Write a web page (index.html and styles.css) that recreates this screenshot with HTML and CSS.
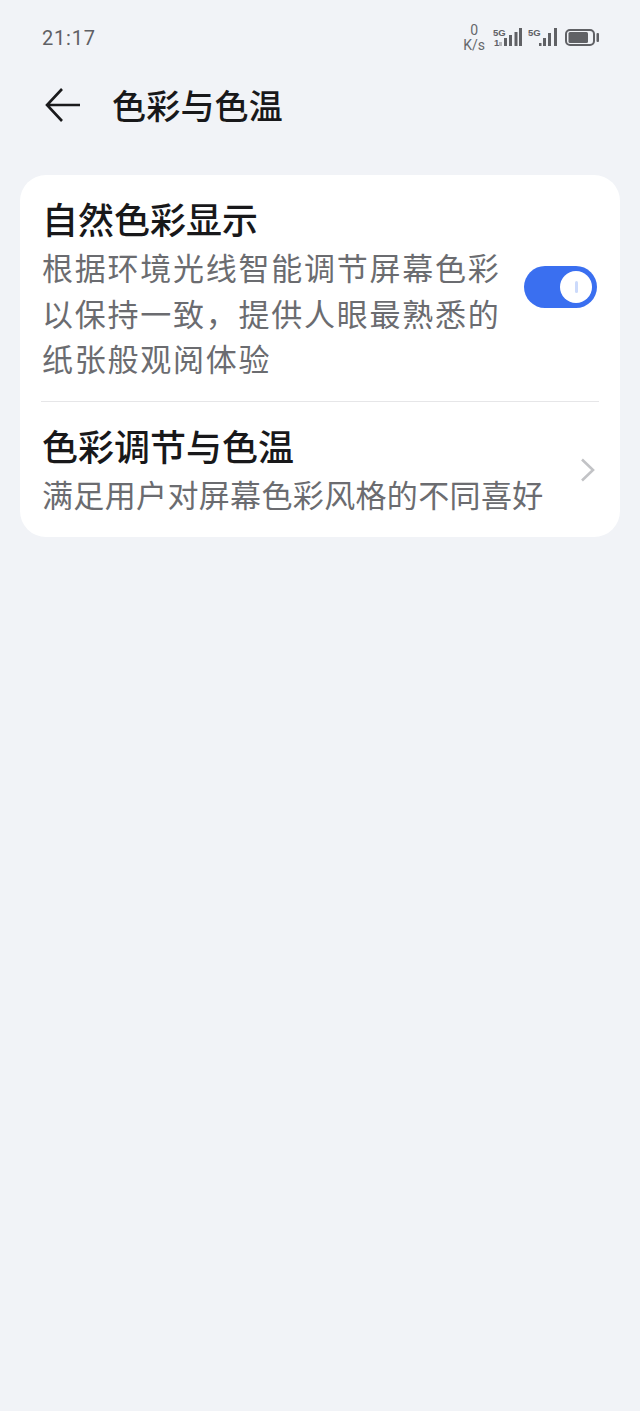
FILE: index.html
```html
<!DOCTYPE html>
<html lang="zh-CN">
<head>
    <meta charset="UTF-8">
    <meta name="viewport" content="width=device-width, initial-scale=1.0">
    <title>色彩与色温</title>
    <link rel="stylesheet" href="styles.css">
</head>
<body>
    <!-- 状态栏 -->
    <div class="status-bar">
        <span class="time">21:17</span>
        <div class="status-icons">
            <div class="speed"><span>0</span><span>K/s</span></div>
            <svg class="signal" width="30" height="20" viewBox="0 0 30 20">
                <text x="0" y="9" class="net-label">5G</text>
                <text x="1" y="19" class="net-label">1</text>
                <rect x="6" y="15" width="3" height="4" fill="#b5b6b9"/>
                <rect x="11" y="11" width="3" height="8" fill="#606165"/>
                <rect x="16" y="8" width="3" height="11" fill="#606165"/>
                <rect x="21.5" y="5" width="3" height="14" fill="#606165"/>
                <rect x="26" y="1" width="3" height="18" fill="#606165"/>
            </svg>
            <svg class="signal" width="30" height="20" viewBox="0 0 30 20">
                <text x="0" y="9" class="net-label">5G</text>
                <rect x="11" y="16" width="2.5" height="3" fill="#606165"/>
                <rect x="15" y="11" width="3" height="8" fill="#606165"/>
                <rect x="20" y="6" width="3" height="13" fill="#606165"/>
                <rect x="26" y="1" width="3" height="18" fill="#606165"/>
            </svg>
            <svg class="battery" width="36" height="20" viewBox="0 0 36 20">
                <rect x="3" y="3" width="28" height="15" rx="4" fill="none" stroke="#606165" stroke-width="2"/>
                <rect x="5.5" y="5" width="19.5" height="11" rx="1.5" fill="#606165"/>
                <rect x="33.5" y="6" width="2.5" height="9" rx="1" fill="#606165"/>
            </svg>
        </div>
    </div>

    <!-- 标题栏 -->
    <div class="title-bar">
        <svg class="back" width="36" height="36" viewBox="0 0 36 36">
            <path d="M17 2 L2 18 L17 34 M2 18 H35" fill="none" stroke="#1a1a1c" stroke-width="2.6"/>
        </svg>
        <h1>色彩与色温</h1>
    </div>

    <!-- 设置卡片 -->
    <div class="card">
        <div class="row row-first">
            <div class="row-text">
                <div class="row-title">自然色彩显示</div>
                <div class="row-desc wide">根据环境光线智能调节屏幕色彩<br>以保持一致，提供人眼最熟悉的<br>纸张般观阅体验</div>
            </div>
            <div class="switch">
                <div class="knob"><span></span></div>
            </div>
        </div>
        <div class="divider"></div>
        <div class="row row-last">
            <div class="row-text">
                <div class="row-title">色彩调节与色温</div>
                <div class="row-desc">满足用户对屏幕色彩风格的不同喜好</div>
            </div>
            <svg class="chevron" width="16" height="24" viewBox="0 0 16 24">
                <path d="M2 1.5 L13 12 L2 22.5" fill="none" stroke="#c2c3c6" stroke-width="2.6"/>
            </svg>
        </div>
    </div>
</body>
</html>
```

FILE: styles.css
```css
html, body {
    height: 100%;
}

body {
    margin: 0;
    background: #f1f3f7;
    font-family: "Noto Sans CJK SC", "Noto Sans", sans-serif;
    color: #18181a;
}

.status-bar {
    display: flex;
    justify-content: space-between;
    align-items: center;
    height: 30px;
    padding: 22px 41px 0 42px;
}

.time {
    font-family: Roboto, sans-serif;
    font-size: 20px;
    letter-spacing: 0.8px;
    color: #5f6064;
    padding-top: 1px;
}

.status-icons {
    display: flex;
    align-items: center;
    gap: 5px;
}

.speed {
    display: flex;
    flex-direction: column;
    align-items: center;
    font-family: Roboto, sans-serif;
    font-size: 14px;
    line-height: 15px;
    color: #66676b;
    margin-right: 3px;
    padding-top: 2px;
}

.net-label {
    font-family: "Liberation Sans", sans-serif;
    font-size: 9.5px;
    font-weight: bold;
    fill: #606165;
}

.title-bar {
    display: flex;
    align-items: center;
    height: 50px;
    margin-top: 28px;
    padding-left: 45px;
}

.back {
    margin-right: 31px;
}

h1 {
    margin: 0;
    font-size: 34px;
    font-weight: 500;
    line-height: 50px;
    letter-spacing: 0.2px;
}

.card {
    margin: 45px 20px 0;
    background: #fff;
    border-radius: 26px;
}

.row {
    display: flex;
    align-items: center;
    justify-content: space-between;
    padding-left: 22px;
}

.row-first {
    height: 226px;
    padding-right: 23px;
}

.row-last {
    height: 135px;
    padding-right: 24px;
}

.row-title {
    font-size: 36px;
    font-weight: 500;
    line-height: 46px;
    margin-bottom: 3px;
}

.row-desc {
    font-size: 31px;
    line-height: 45.5px;
    letter-spacing: 0.35px;
    color: #6b6c70;
}

.wide {
    letter-spacing: 1.75px;
}

.switch {
    display: flex;
    justify-content: flex-end;
    align-items: center;
    width: 73px;
    height: 42px;
    margin-bottom: 2px;
    padding-right: 4px;
    box-sizing: border-box;
    background: #3a6ff0;
    border-radius: 21px;
}

.knob {
    display: flex;
    justify-content: center;
    align-items: center;
    width: 32px;
    height: 32px;
    margin-right: 1px;
    background: #fff;
    border-radius: 50%;
}

.knob span {
    width: 3px;
    height: 12px;
    background: #ccdafb;
    border-radius: 2px;
}

.divider {
    height: 1px;
    margin: 0 21px;
    background: #e6e6e8;
}
```
